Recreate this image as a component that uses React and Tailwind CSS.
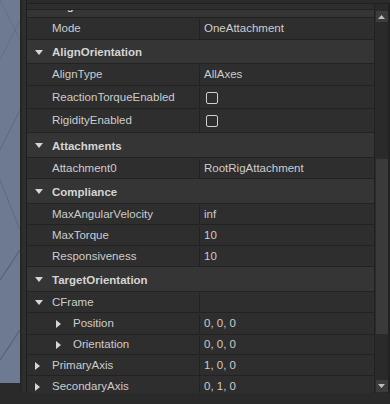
import React from "react";

const font = { fontFamily: '"Liberation Sans", Arial, sans-serif' };

function Down({ x = "ml-[8px]" }) {
  return (
    <svg width="8" height="5" viewBox="0 0 8 5" className={x}>
      <polygon points="0,0 8,0 4,5" fill="#d6d6d6" />
    </svg>
  );
}
function Right({ x = "ml-[8px]" }) {
  return (
    <svg width="5" height="8" viewBox="0 0 5 8" className={x}>
      <polygon points="0,0 5,4 0,8" fill="#d6d6d6" />
    </svg>
  );
}

function Header({ label, h }) {
  return (
    <div className="flex items-center pt-[1px] bg-[#353535] border-b border-[#222222] shrink-0" style={{ height: h }}>
      <Down x="ml-[8px]" />
      <span className="ml-[9px] font-bold text-[11.5px] leading-[14px] text-[#d4d4d4]">{label}</span>
    </div>
  );
}

function Row({ label, value, h, check, arrow, nested }) {
  return (
    <div className="flex border-b border-[#222222] bg-[#2e2e2e] shrink-0 pt-[1px]" style={{ height: h }}>
      <div className="w-[173px] flex items-center border-r border-[#222222] shrink-0">
        {arrow === "down" && <Down x="ml-[8px]" />}
        {arrow === "right" && !nested && <Right x="ml-[8px]" />}
        {arrow === "right" && nested && <Right x="ml-[29px]" />}
        <span
          className={
            "text-[11.5px] text-[#cccccc] " +
            (arrow === "down" ? "ml-[9px]" : arrow === "right" ? "ml-[12px]" : "ml-[25px]")
          }
        >
          {label}
        </span>
      </div>
      <div className="flex-1 flex items-center">
        {check ? (
          <div className="ml-[6px] w-[12px] h-[12px] border border-[#cfcfcf] rounded-[2px]" />
        ) : (
          <span className="ml-[4px] text-[11.5px] text-[#cccccc]">{value}</span>
        )}
      </div>
    </div>
  );
}

export default function App() {
  return (
    <div className="w-[390px] h-[404px] bg-[#2a2a2a] flex flex-col overflow-hidden" style={font}>
      <div className="flex h-[393px]">
        <div className="w-[20px] flex flex-col">
          <div className="h-[383px] bg-[#6e7992] overflow-hidden">
            <svg width="20" height="383" viewBox="0 0 20 383">
              <line x1="0" y1="0" x2="20" y2="40" stroke="#646f87" strokeWidth="1" />
              <line x1="0" y1="60" x2="20" y2="20" stroke="#646f87" strokeWidth="1" />
              <line x1="0" y1="150" x2="20" y2="110" stroke="#5f6a82" strokeWidth="1" />
              <line x1="0" y1="180" x2="20" y2="230" stroke="#5f6a82" strokeWidth="1" />
              <line x1="0" y1="280" x2="20" y2="250" stroke="#5c667e" strokeWidth="1.5" />
              <line x1="0" y1="360" x2="20" y2="330" stroke="#5c667e" strokeWidth="1.5" />
            </svg>
          </div>
          <div className="flex-1 bg-[#2a2a2a]" />
        </div>
        <div className="w-[7px] bg-[#2e2e2e] border-l-2 border-[#262626] border-r border-r-[#1e1e1e]" />
        <div className="flex-1 flex flex-col bg-[#2e2e2e]">
          <div className="h-[4px] bg-[#2b2b2b] border-b border-[#1f1f1f] shrink-0" />
          <div className="flex flex-1 min-h-0">
            <div className="w-[347px] flex flex-col">
              <div className="h-[6px] bg-[#2e2e2e] border-b border-[#222222] shrink-0" />
              <div className="flex flex-col flex-1 min-h-0 overflow-hidden">
                <div className="h-[8px] bg-[#353535] border-b border-[#222222] shrink-0 flex items-end pb-[4px]">
                  <div className="h-[14px] flex items-center shrink-0">
                    <Down x="ml-[8px]" />
                    <span className="ml-[9px] font-bold text-[11.5px] leading-[14px] text-[#d4d4d4]">Alignment</span>
                  </div>
                </div>
                <Row label="Mode" value="OneAttachment" h={22} />
                <Header label="AlignOrientation" h={24} />
                <Row label="AlignType" value="AllAxes" h={22} />
                <Row label="ReactionTorqueEnabled" check h={23} />
                <Row label="RigidityEnabled" check h={24} />
                <Header label="Attachments" h={25} />
                <Row label="Attachment0" value="RootRigAttachment" h={21} />
                <Header label="Compliance" h={25} />
                <Row label="MaxAngularVelocity" value="inf" h={21} />
                <Row label="MaxTorque" value="10" h={21} />
                <Row label="Responsiveness" value="10" h={21} />
                <Header label="TargetOrientation" h={25} />
                <Row label="CFrame" value="" h={21} arrow="down" />
                <Row label="Position" value="0, 0, 0" h={22} arrow="right" nested />
                <Row label="Orientation" value="0, 0, 0" h={20} arrow="right" nested />
                <Row label="PrimaryAxis" value="1, 0, 0" h={21} arrow="right" />
                <Row label="SecondaryAxis" value="0, 1, 0" h={21} arrow="right" />
              </div>
            </div>
            <div className="w-[14px] bg-[#2a2a2a] border-l border-[#222222] flex flex-col items-center pt-[7px] pb-[1px]">
              <div className="w-[12px] h-[11px] bg-[#3c3c3c] flex items-center justify-center shrink-0">
                <svg width="7" height="4" viewBox="0 0 7 4">
                  <polygon points="0,4 7,4 3.5,0" fill="#bdbdbd" />
                </svg>
              </div>
              <div className="flex-1 w-[12px] flex flex-col pt-[137px] pb-[46px]">
                <div className="flex-1 bg-[#3a3a3a]" />
              </div>
              <div className="w-[12px] h-[12px] bg-[#3c3c3c] flex items-center justify-center shrink-0">
                <svg width="7" height="4" viewBox="0 0 7 4">
                  <polygon points="0,0 7,0 3.5,4" fill="#bdbdbd" />
                </svg>
              </div>
            </div>
            <div className="w-[2px] bg-[#222222]" />
          </div>
        </div>
      </div>
      <div className="flex-1 bg-[#2a2a2a]" />
    </div>
  );
}
